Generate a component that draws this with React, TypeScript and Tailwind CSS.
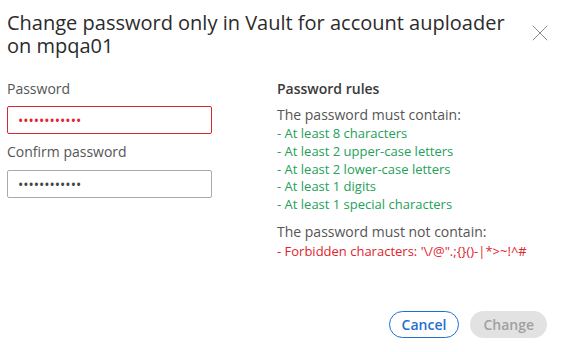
import { X } from "lucide-react";

const mustContain = [
  "At least 8 characters",
  "At least 2 upper-case letters",
  "At least 2 lower-case letters",
  "At least 1 digits",
  "At least 1 special characters",
];

export default function App() {
  return (
    <div className="h-[352px] w-[565px] bg-white font-['Open_Sans',sans-serif] text-[#333]">
      <div className="flex items-start justify-between pl-[7px] pr-[11px] pt-[11px]">
        <h1 className="w-[520px] text-[20px] leading-[23px] text-[#2b2b2b]">
          Change password only in Vault for account auploader on mpqa01
        </h1>
        <button className="mt-[8px] text-[#8a8a8a]">
          <X className="size-[28px]" strokeWidth={0.85} />
        </button>
      </div>

      <div className="mt-[22px] flex pl-[7px]">
        <div className="w-[205px]">
          <label className="block text-[14px] leading-[20px] text-[#555]">Password</label>
          <input
            type="password"
            defaultValue="abcdefghijkl"
            className="mt-[7px] block h-[28px] w-[205px] rounded-[2px] border border-[#d9252f] px-[10px] text-[14px] text-[#e0242d] outline-none"
          />
          <label className="mt-[8px] block text-[14px] leading-[20px] text-[#555]">
            Confirm password
          </label>
          <input
            type="password"
            defaultValue="abcdefghijkl"
            className="mt-[8px] block h-[28px] w-[205px] rounded-[2px] border border-[#aaa] px-[10px] text-[14px] text-[#444] outline-none"
          />
        </div>

        <div className="ml-[65px]">
          <h2 className="text-[14px] font-semibold leading-[20px] text-[#3a3a3a]">Password rules</h2>
          <p className="mt-[6px] text-[14px] leading-[20px] text-[#555]">The password must contain:</p>
          <ul className="text-[13px] leading-[17.8px] text-[#25a05a]">
            {mustContain.map((rule) => (
              <li key={rule}>- {rule}</li>
            ))}
          </ul>
          <p className="mt-[8px] text-[14px] leading-[20px] text-[#555]">The password must not contain:</p>
          <p className="text-[13px] leading-[18px] text-[#e0242d]">
            - Forbidden characters: {"'\\/@\".;{}()-|*>~!^#"}
          </p>
        </div>
      </div>

      <div className="mt-[51px] flex justify-end gap-[11px] pr-[18px]">
        <button className="h-[27px] rounded-full border border-[#1f6fd0] px-[12px] text-[14px] font-semibold text-[#1f6fd0]">
          Cancel
        </button>
        <button className="h-[27px] rounded-full bg-[#e2e2e2] px-[13px] text-[14px] font-semibold text-[#a0a0a0]">
          Change
        </button>
      </div>
    </div>
  );
}
